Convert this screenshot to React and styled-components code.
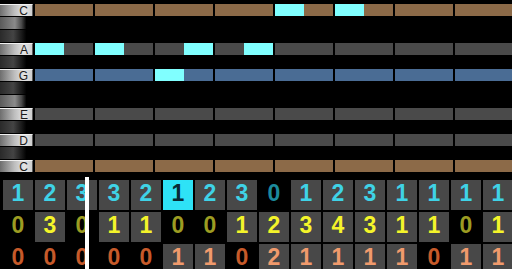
import React from "react";
import styled, { createGlobalStyle, css } from "styled-components";

const GlobalStyle = createGlobalStyle`
  html, body { margin: 0; padding: 0; background: #000; }
  body { overflow: hidden; font-family: "Liberation Sans", Arial, sans-serif; }
`;

const Screen = styled.div`
  position: relative;
  width: 512px;
  height: 269px;
  overflow: hidden;
  background: #000;
  display: flex;
  flex-direction: column;
`;

const Roll = styled.div`
  padding-top: 4px;
  display: flex;
  flex-direction: column;
`;

const NoteRow = styled.div`
  display: flex;
  gap: 2px;
  height: 13px;
`;

const keyStyles = {
  scale: css`
    background: linear-gradient(to right, #6e6e6e 0%, #bdbdbd 45%, #e4e4e4 75%, #d0d0d0 100%);
    border-top: 1px solid #f0f0f0;
    border-right: 1px solid #5a5a5a;
    height: 12px;
  `,
  white: css`
    background: linear-gradient(to right, #5a5a5a 0%, #8a8a8a 45%, #4a4a4a 65%, #000 80%);
    height: 12px;
  `,
  black: css`
    background: linear-gradient(to right, #2a2a2a 0%, #444 40%, #1a1a1a 65%, #000 80%);
    height: 12px;
  `,
};

const Key = styled.div`
  width: 33px;
  flex-shrink: 0;
  box-sizing: border-box;
  display: flex;
  align-items: center;
  justify-content: flex-end;
  padding-right: 4px;
  font-size: 12px;
  line-height: 1;
  color: #1a1a1a;
  ${(p) => keyStyles[p.$kind]}
`;

const Track = styled.div`
  display: flex;
  gap: 2px;
`;

const Segment = styled.div`
  display: flex;
  width: 58px;
  flex-shrink: 0;
`;

const Step = styled.div`
  width: 29px;
  height: 12px;
  background: ${(p) => (p.$on ? "#80ffff" : p.$color)};
`;

const Grid = styled.div`
  margin-top: 7px;
  padding-left: 3px;
  display: grid;
  grid-template-columns: repeat(16, 30px);
  grid-auto-rows: 30px;
  gap: 2px;
`;

const Cell = styled.div`
  display: flex;
  align-items: center;
  justify-content: center;
  box-sizing: border-box;
  padding-bottom: 3px;
  font-weight: bold;
  font-size: 23px;
  line-height: 1;
  background: ${(p) => p.$bg};
  color: ${(p) => p.$fg};
`;

const Playhead = styled.div`
  position: absolute;
  left: 85px;
  top: 177px;
  width: 4px;
  height: 92px;
  background: #fff;
`;

const BROWN = "#8c6a48";
const GRAY = "#4a4a4a";
const BLUE = "#4a6c94";

// 13 semitones from high C to low C
const rows = [
  { kind: "scale", label: "C", color: BROWN, on: [8, 10] },
  { kind: "white" },
  { kind: "black" },
  { kind: "scale", label: "A", color: GRAY, on: [0, 2, 5, 7] },
  { kind: "black" },
  { kind: "scale", label: "G", color: BLUE, on: [4] },
  { kind: "black" },
  { kind: "white" },
  { kind: "scale", label: "E", color: GRAY, on: [] },
  { kind: "black" },
  { kind: "scale", label: "D", color: GRAY, on: [] },
  { kind: "black" },
  { kind: "scale", label: "C", color: BROWN, on: [] },
];

const gridRows = [
  [1, 2, 3, 3, 2, 1, 2, 3, 0, 1, 2, 3, 1, 1, 1, 1],
  [0, 3, 0, 1, 1, 0, 0, 1, 2, 3, 4, 3, 1, 1, 0, 1],
  [0, 0, 0, 0, 0, 1, 1, 0, 2, 1, 1, 1, 1, 0, 1, 1],
];

const palettes = [
  { on: "#3fd2e6", off: "#1c8a9c" },
  { on: "#f4f42a", off: "#9c9c22" },
  { on: "#f09a6c", off: "#c65a2a" },
];

function cellColors(r, c, v) {
  if (r === 0 && c === 5) return { bg: "#2ee2f6", fg: "#082a34" };
  if (v === 0) return { bg: "#000", fg: palettes[r].off };
  return { bg: "#484848", fg: palettes[r].on };
}

export default function App() {
  return (
    <>
      <GlobalStyle />
      <Screen>
        <Roll>
          {rows.map((row, i) => (
            <NoteRow key={i}>
              <Key $kind={row.kind}>{row.label || ""}</Key>
              {row.color && (
                <Track>
                  {Array.from({ length: 8 }).map((_, s) => (
                    <Segment key={s}>
                      {[0, 1].map((k) => (
                        <Step
                          key={k}
                          $color={row.color}
                          $on={row.on.includes(s * 2 + k)}
                        />
                      ))}
                    </Segment>
                  ))}
                </Track>
              )}
            </NoteRow>
          ))}
        </Roll>
        <Grid>
          {gridRows.map((vals, r) =>
            vals.map((v, c) => {
              const { bg, fg } = cellColors(r, c, v);
              return (
                <Cell key={`${r}-${c}`} $bg={bg} $fg={fg}>
                  {v}
                </Cell>
              );
            })
          )}
        </Grid>
        <Playhead />
      </Screen>
    </>
  );
}
